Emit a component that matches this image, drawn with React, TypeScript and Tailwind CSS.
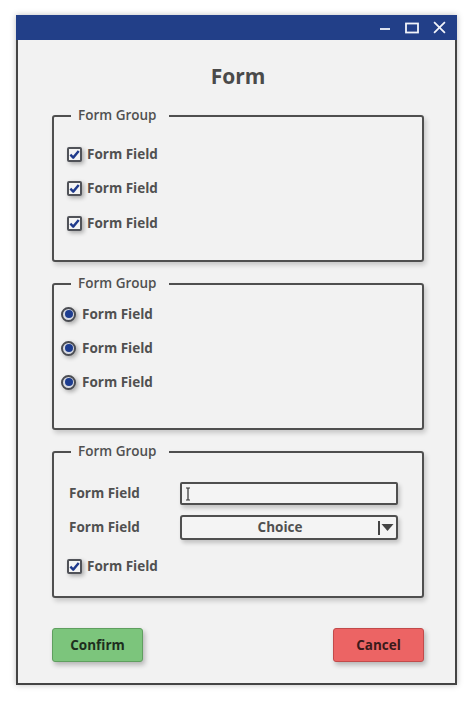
import { ReactNode } from 'react';

const font = { fontFamily: '"Open Sans", "Noto Sans", "Liberation Sans", sans-serif' };

function Checkbox() {
  return (
    <span className="flex h-[15px] w-[15px] shrink-0 items-center justify-center rounded-[2px] border-2 border-[#505258] bg-[#f4f4f4] shadow-[2px_2px_4px_rgba(0,0,0,0.3)]">
      <svg viewBox="0 0 12 12" className="h-[11px] w-[11px]">
        <path d="M1.5 6.2 L4.6 9.4 L10.6 2.2" fill="none" stroke="#1f3a8c" strokeWidth="2.6" strokeLinejoin="round" />
      </svg>
    </span>
  );
}

function Radio() {
  return (
    <span className="flex h-[15px] w-[15px] shrink-0 items-center justify-center rounded-full border-2 border-[#4a4c52] bg-[#d8dbe4] shadow-[2px_2px_4px_rgba(0,0,0,0.3)]">
      <span className="h-[8px] w-[8px] rounded-full bg-[#1c3c8f]" />
    </span>
  );
}

function Group({ children, className }: { children: ReactNode; className: string }) {
  return (
    <div className={`relative h-[147px] rounded-[3px] border-2 border-[#4f4f4f] shadow-[2px_3px_5px_rgba(0,0,0,0.18)] ${className}`}>
      <span className="absolute -top-[11px] left-[17px] bg-[#f2f2f2] pl-[7px] pr-[12px] text-[13.5px] leading-[18px] font-semibold text-[#505050]">
        Form Group
      </span>
      {children}
    </div>
  );
}

export default function App() {
  return (
    <div className="min-h-[702px] bg-white pl-[16px] pt-[15px]" style={font}>
      <div className="flex w-[441px] flex-col shadow-[0_0_6px_rgba(0,0,0,0.25)]">
        <div className="flex h-[25px] items-center justify-end gap-[14px] bg-[#223f88] pr-[11px]">
          <svg viewBox="0 0 12 12" className="h-[12px] w-[12px]">
            <path d="M1 7 H11" stroke="#f2f4fa" strokeWidth="1.8" />
          </svg>
          <svg viewBox="0 0 14 12" className="h-[12px] w-[14px]">
            <rect x="1" y="1.5" width="12" height="9" fill="none" stroke="#f2f4fa" strokeWidth="1.8" />
          </svg>
          <svg viewBox="0 0 12 12" className="h-[13px] w-[13px]">
            <path d="M1 1 L11 11 M11 1 L1 11" stroke="#f2f4fa" strokeWidth="1.6" />
          </svg>
        </div>
        <div className="flex flex-col border-x-2 border-b-2 border-[#444] bg-[#f2f2f2] pb-[21px] pl-[34px] pr-[31px] pt-[22px]">
          <h1 className="text-center text-[21px] leading-[28px] font-bold text-[#4a4a4a]">Form</h1>

          <div className="mt-[25px] flex flex-col gap-[21px]">
            <Group className="flex flex-col gap-[14.5px] pl-[13px] pt-[27px]">
              {[0, 1, 2].map((i) => (
                <label key={i} className="flex h-[20px] items-center gap-[5px] text-[13.5px] font-bold text-[#505050]">
                  <Checkbox />
                  Form Field
                </label>
              ))}
            </Group>

            <Group className="flex flex-col gap-[14px] pl-[7px] pt-[19px]">
              {[0, 1, 2].map((i) => (
                <label key={i} className="flex h-[20px] items-center gap-[6px] text-[13.5px] font-bold text-[#505050]">
                  <Radio />
                  Form Field
                </label>
              ))}
            </Group>

            <Group className="flex flex-col pl-[15px] pt-[29px]">
              <div className="flex h-[23px] items-center">
                <span className="w-[111px] text-[13.5px] font-bold text-[#505050]">Form Field</span>
                <div className="flex h-[23px] w-[218px] items-center rounded-[2px] border-2 border-[#4f4f4f] bg-[#f4f4f4] pl-[3px] shadow-[2px_3px_4px_rgba(0,0,0,0.2)]">
                  <svg viewBox="0 0 6 14" className="h-[14px] w-[6px]">
                    <path d="M1 1 H5 M3 1 V13 M1 13 H5" stroke="#333" strokeWidth="1.2" fill="none" />
                  </svg>
                </div>
              </div>
              <div className="mt-[10px] flex h-[25px] items-center">
                <span className="w-[111px] text-[13.5px] font-bold text-[#505050]">Form Field</span>
                <div className="flex h-[25px] w-[218px] items-center rounded-[3px] border-2 border-[#4f4f4f] bg-[#f4f4f4] shadow-[2px_3px_4px_rgba(0,0,0,0.2)]">
                  <span className="flex-1 text-center text-[13.5px] font-bold text-[#505050]">Choice</span>
                  <span className="mr-[1px] h-[14px] w-[2px] bg-[#444]" />
                  <svg viewBox="0 0 12 8" className="mr-[2px] h-[8px] w-[13px]">
                    <path d="M0 0 H12 L6 7 Z" fill="#444" />
                  </svg>
                </div>
              </div>
              <label className="-ml-[2px] mt-[16px] flex h-[20px] items-center gap-[5px] text-[13.5px] font-bold text-[#505050]">
                <Checkbox />
                Form Field
              </label>
            </Group>
          </div>

          <div className="mt-[30px] flex justify-between">
            <button className="h-[34px] w-[91px] rounded-[3px] border border-[#5f9f5f] bg-[#7cc57c] text-[13.5px] font-bold text-[#1e2e1e] shadow-[2px_3px_5px_rgba(0,0,0,0.25)]">
              Confirm
            </button>
            <button className="h-[34px] w-[91px] rounded-[3px] border border-[#c24a4a] bg-[#ec6464] text-[13.5px] font-bold text-[#3a1a1a] shadow-[2px_3px_5px_rgba(0,0,0,0.25)]">
              Cancel
            </button>
          </div>
        </div>
      </div>
    </div>
  );
}
